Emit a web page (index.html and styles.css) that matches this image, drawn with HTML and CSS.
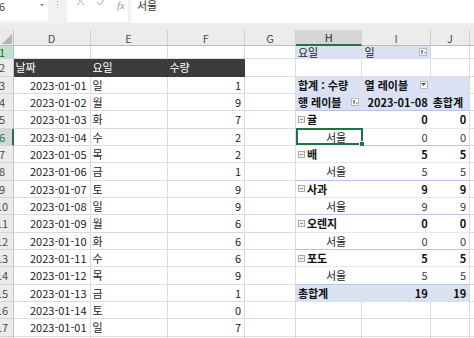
FILE: index.html
```html
<!DOCTYPE html>
<html lang="ko">
<head>
<meta charset="utf-8">
<title>Pivot</title>
<link rel="stylesheet" href="styles.css">
</head>
<body>
<div class="app">
  <div class="bar">
    <div class="namebox"><span class="nb-text">6</span><span class="nb-arrow"></span></div>
    <div class="grip"><i></i><i></i><i></i></div>
    <div class="fxbtns">
      <svg class="ic" width="9" height="9" viewBox="0 0 9 9"><path d="M1 1L8 8M8 1L1 8" stroke="#b0b0b0" stroke-width="1" fill="none"/></svg>
      <svg class="ic" width="10" height="9" viewBox="0 0 10 9"><path d="M1 5L4 8L9 1" stroke="#b0b0b0" stroke-width="1" fill="none"/></svg>
      <span class="fx">fx</span>
    </div>
    <div class="formula">서울</div>
  </div>
  <div class="strip"></div>
  <div class="sheet">
    <!-- column headers -->
    <div class="c corner"><span class="tri"></span></div>
    <div class="c ch">D</div>
    <div class="c ch">E</div>
    <div class="c ch">F</div>
    <div class="c ch">G</div>
    <div class="c ch sel">H</div>
    <div class="c ch">I</div>
    <div class="c ch">J</div>
    <div class="c ch"></div>

    <!-- row 1 -->
    <div class="c rh rh-hi"><span>1</span></div>
    <div class="c"></div><div class="c"></div><div class="c"></div><div class="c"></div>
    <div class="c pb">요일</div>
    <div class="c pb">일<span class="fbtn"><svg width="6" height="5" viewBox="0 0 6 5"><path d="M0.5 0.5H3.5L2.5 2V4.5L1.5 4V2Z" fill="#555"/><path d="M4 2.5H6L5 4Z" fill="#555"/></svg></span></div>
    <div class="c"></div>
    <div class="c"></div>

    <!-- row 2 -->
    <div class="c rh"><span>2</span></div>
    <div class="c dk">날짜</div>
    <div class="c dk">요일</div>
    <div class="c dk">수량</div>
    <div class="c"></div><div class="c"></div><div class="c"></div><div class="c"></div><div class="c"></div>

    <!-- row 3 -->
    <div class="c rh"><span>3</span></div>
    <div class="c r">2023-01-01</div><div class="c">일</div><div class="c r">1</div><div class="c"></div>
    <div class="c pb pv b">합계 : 수량</div>
    <div class="c pb pv b">열 레이블<span class="fbtn"><svg width="5" height="3" viewBox="0 0 5 3"><path d="M0 0H5L2.5 3Z" fill="#555"/></svg></span></div>
    <div class="c pb b"></div>
    <div class="c"></div>

    <!-- row 4 -->
    <div class="c rh"><span>4</span></div>
    <div class="c r">2023-01-02</div><div class="c">월</div><div class="c r">9</div><div class="c"></div>
    <div class="c pb pv b hdr">행 레이블<span class="fbtn"><svg width="6" height="5" viewBox="0 0 6 5"><path d="M0.5 0.5H3.5L2.5 2V4.5L1.5 4V2Z" fill="#555"/><path d="M4 2.5H6L5 4Z" fill="#555"/></svg></span></div>
    <div class="c pb pv b hdr r">2023-01-08</div>
    <div class="c pb b hdr">총합계</div>
    <div class="c"></div>

    <!-- row 5 -->
    <div class="c rh"><span>5</span></div>
    <div class="c r">2023-01-03</div><div class="c">화</div><div class="c r">7</div><div class="c"></div>
    <div class="c pv grp b"><span class="mbox"></span>귤</div>
    <div class="c pv grp b r">0</div>
    <div class="c grp b r">0</div>
    <div class="c"></div>

    <!-- row 6 -->
    <div class="c rh rh-sel"><span>6</span></div>
    <div class="c r">2023-01-04</div><div class="c">수</div><div class="c r">2</div><div class="c"></div>
    <div class="c pv sub cur">서울</div>
    <div class="c pv r sv">0</div>
    <div class="c r sv">0</div>
    <div class="c"></div>

    <!-- row 7 -->
    <div class="c rh"><span>7</span></div>
    <div class="c r">2023-01-05</div><div class="c">목</div><div class="c r">2</div><div class="c"></div>
    <div class="c pv grp b"><span class="mbox"></span>배</div>
    <div class="c pv grp b r">5</div>
    <div class="c grp b r">5</div>
    <div class="c"></div>

    <!-- row 8 -->
    <div class="c rh"><span>8</span></div>
    <div class="c r">2023-01-06</div><div class="c">금</div><div class="c r">1</div><div class="c"></div>
    <div class="c pv sub">서울</div>
    <div class="c pv r sv">5</div>
    <div class="c r sv">5</div>
    <div class="c"></div>

    <!-- row 9 -->
    <div class="c rh"><span>9</span></div>
    <div class="c r">2023-01-07</div><div class="c">토</div><div class="c r">9</div><div class="c"></div>
    <div class="c pv grp b"><span class="mbox"></span>사과</div>
    <div class="c pv grp b r">9</div>
    <div class="c grp b r">9</div>
    <div class="c"></div>

    <!-- row 10 -->
    <div class="c rh"><span>10</span></div>
    <div class="c r">2023-01-08</div><div class="c">일</div><div class="c r">9</div><div class="c"></div>
    <div class="c pv sub">서울</div>
    <div class="c pv r sv">9</div>
    <div class="c r sv">9</div>
    <div class="c"></div>

    <!-- row 11 -->
    <div class="c rh"><span>11</span></div>
    <div class="c r">2023-01-09</div><div class="c">월</div><div class="c r">6</div><div class="c"></div>
    <div class="c pv grp b"><span class="mbox"></span>오렌지</div>
    <div class="c pv grp b r">0</div>
    <div class="c grp b r">0</div>
    <div class="c"></div>

    <!-- row 12 -->
    <div class="c rh"><span>12</span></div>
    <div class="c r">2023-01-10</div><div class="c">화</div><div class="c r">6</div><div class="c"></div>
    <div class="c pv sub">서울</div>
    <div class="c pv r sv">0</div>
    <div class="c r sv">0</div>
    <div class="c"></div>

    <!-- row 13 -->
    <div class="c rh"><span>13</span></div>
    <div class="c r">2023-01-11</div><div class="c">수</div><div class="c r">6</div><div class="c"></div>
    <div class="c pv grp b"><span class="mbox"></span>포도</div>
    <div class="c pv grp b r">5</div>
    <div class="c grp b r">5</div>
    <div class="c"></div>

    <!-- row 14 -->
    <div class="c rh"><span>14</span></div>
    <div class="c r">2023-01-12</div><div class="c">목</div><div class="c r">9</div><div class="c"></div>
    <div class="c pv sub">서울</div>
    <div class="c pv r sv">5</div>
    <div class="c r sv">5</div>
    <div class="c"></div>

    <!-- row 15 -->
    <div class="c rh"><span>15</span></div>
    <div class="c r">2023-01-13</div><div class="c">금</div><div class="c r">1</div><div class="c"></div>
    <div class="c pb pv tot b">총합계</div>
    <div class="c pb pv tot b r">19</div>
    <div class="c pb tot b r">19</div>
    <div class="c"></div>

    <!-- row 16 -->
    <div class="c rh"><span>16</span></div>
    <div class="c r">2023-01-14</div><div class="c">토</div><div class="c r">0</div><div class="c"></div>
    <div class="c"></div><div class="c"></div><div class="c"></div><div class="c"></div>

    <!-- row 17 -->
    <div class="c rh"><span>17</span></div>
    <div class="c r">2023-01-01</div><div class="c">일</div><div class="c r">7</div><div class="c"></div>
    <div class="c"></div><div class="c"></div><div class="c"></div><div class="c"></div>

    <!-- row 18 -->
    <div class="c rh"><span>18</span></div>
    <div class="c"></div><div class="c"></div><div class="c"></div><div class="c"></div>
    <div class="c"></div><div class="c"></div><div class="c"></div><div class="c"></div>
  </div>
</div>
</body>
</html>
```

FILE: styles.css
```css
html, body {
  margin: 0;
  padding: 0;
  background: #ffffff;
}
body {
  width: 474px;
  height: 338px;
  overflow: hidden;
  font-family: "Noto Sans CJK KR", "Noto Sans", sans-serif;
  color: #1b1b1b;
}
.app {
  display: flex;
  flex-direction: column;
  width: 474px;
  height: 338px;
  overflow: hidden;
  background: #f1f1f1;
}

/* formula bar */
.bar {
  display: flex;
  height: 23px;
  flex: none;
}
.namebox {
  width: 48px;
  background: #fff;
  display: flex;
  align-items: flex-start;
  justify-content: space-between;
  height: 21px;
  font-size: 11px;
  line-height: 12px;
  color: #444;
}
.nb-text {
  margin-left: -1px;
}
.nb-arrow {
  width: 0;
  height: 0;
  border-left: 2px solid transparent;
  border-right: 2px solid transparent;
  border-top: 2px solid #777;
  margin-right: 4px;
  margin-top: 4px;
}
.grip {
  width: 19px;
  display: flex;
  flex-direction: column;
  align-items: center;
  gap: 2px;
  padding-top: 1px;
}
.grip i {
  display: block;
  width: 1px;
  height: 1px;
  background: #b8b8b8;
}
.fxbtns {
  width: 61px;
  height: 22px;
  background: #fff;
  display: flex;
  align-items: flex-start;
  gap: 11px;
  padding-left: 9px;
  box-sizing: border-box;
}
.ic {
  display: block;
  margin-top: -3px;
}
.fx {
  font-family: "Liberation Serif", serif;
  font-style: italic;
  font-size: 11px;
  line-height: 10px;
  color: #9a9a9a;
}
.formula {
  flex: 1;
  margin-left: 3px;
  background: #fff;
  font-size: 11px;
  padding-left: 6px;
  line-height: 11px;
  color: #333;
}
.strip {
  height: 7px;
  flex: none;
  background: #ededed;
}

/* sheet grid */
.sheet {
  display: grid;
  grid-template-columns: 13.5px 77px 77px 77.7px 50.7px 66.6px 68.2px 39.5px 1fr;
  grid-template-rows: 16px 13.3px repeat(17, 17.33px);
  background: #fff;
  flex: none;
}
.c {
  box-sizing: border-box;
  border-right: 1px solid #dcdcdc;
  border-bottom: 1px solid #dcdcdc;
  font-size: 11px;
  line-height: 14px;
  padding: 0 2px 0 2px;
  white-space: nowrap;
  display: flex;
  align-items: center;
  min-width: 0;
}
.r {
  justify-content: flex-end;
  padding-right: 3px;
}
.b {
  font-weight: 700;
  color: #111;
}
.sv {
  color: #3a3a3a;
}

/* headers */
.corner {
  background: #e9e9e9;
  border-right: 1px solid #c4c4c4;
  border-bottom: 1px solid #bcbcbc;
  position: relative;
}
.tri {
  position: absolute;
  right: 1px;
  bottom: 1px;
  width: 0;
  height: 0;
  border-left: 10px solid transparent;
  border-bottom: 10px solid #b4b4b4;
}
.ch {
  background: #ececec;
  border-right: 1px solid #d0d0d0;
  border-bottom: 1px solid #bcbcbc;
  justify-content: center;
  color: #4a4a4a;
  font-size: 11px;
}
.ch.sel {
  background: #d6d6d6;
  border-bottom: 2px solid #217346;
  color: #2a2a2a;
}
.rh {
  background: #ebebeb;
  border-right: 1px solid #c4c4c4;
  border-bottom: 1px solid #d6d6d6;
  overflow: hidden;
  padding: 0;
  color: #4a4a4a;
}
.rh span {
  flex: none;
  width: 24px;
  margin-left: -10px;
  text-align: center;
}
.rh-hi {
  background: #bfe2cb;
  color: #1f6b3f;
}
.rh-sel {
  background: #d6d6d6;
  color: #217346;
  border-right: 2px solid #217346;
}

/* source table header */
.dk {
  background: #3c3c3c;
  color: #ffffff;
  border-right: none;
  border-bottom: 1px solid #3c3c3c;
}

/* pivot */
.pb {
  background: #d9e1f2;
  border-bottom-color: #d9e1f2;
}
.pb.hdr {
  border-bottom: 1px solid #b4c6e7;
}
.pv {
  border-right: none;
}
.grp, .sub {
  border-bottom: 1px solid #e4eaf5;
}
.grp {
  border-top: 1px solid #b4c6e7;
  margin-top: -1px;
}
.sub {
  padding-left: 30px;
}
.tot {
  border-top: 1px solid #b4c6e7;
  margin-top: -1px;
}
.mbox {
  flex: none;
  width: 7px;
  height: 7px;
  box-sizing: border-box;
  border: 1px solid #a8a8a8;
  background: #f4f4f4;
  margin-right: 2px;
  position: relative;
}
.mbox::after {
  content: "";
  position: absolute;
  left: 1px;
  right: 1px;
  top: 2px;
  height: 1px;
  background: #8a8a8a;
}
.fbtn {
  flex: none;
  margin-left: auto;
  margin-right: 1px;
  width: 8px;
  height: 8px;
  box-sizing: border-box;
  border: 1px solid #b9b9b9;
  background: #fbfbfb;
  display: flex;
  align-items: center;
  justify-content: center;
}
.cur {
  position: relative;
  overflow: visible;
}
.cur::after {
  content: "";
  position: absolute;
  left: 0;
  top: -1px;
  right: -1px;
  bottom: 0;
  border: 2px solid #217346;
}
.cur::before {
  content: "";
  position: absolute;
  right: -3px;
  bottom: -2px;
  width: 4px;
  height: 4px;
  background: #217346;
  border: 1px solid #fff;
  z-index: 2;
}
```
